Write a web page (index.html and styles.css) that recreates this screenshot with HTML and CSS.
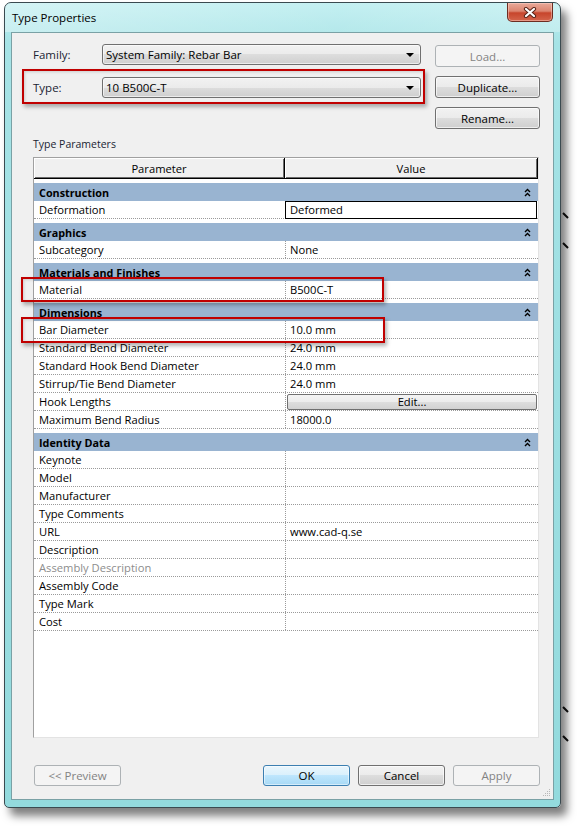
FILE: index.html
```html
<!DOCTYPE html>
<html>
<head>
<meta charset="utf-8">
<title>Type Properties</title>
<link rel="stylesheet" href="styles.css">
</head>
<body>
<svg class="behind" width="25" height="836" viewBox="0 0 25 836">
  <path d="M3 213 L8 218 M3 243 L8 248 M3 707 L8 712 M3 736 L8 741" stroke="#111" stroke-width="2"/>
</svg>
<div class="window">
  <div class="titlebar">
    <span class="title">Type Properties</span>
    <div class="close">
      <svg width="14" height="11" viewBox="0 0 14 11">
        <path d="M3 2 L11 9 M11 2 L3 9" stroke="#5a2418" stroke-width="4.2" stroke-linecap="round"/>
        <path d="M3 2 L11 9 M11 2 L3 9" stroke="#ffffff" stroke-width="2.2" stroke-linecap="round"/>
      </svg>
    </div>
  </div>
  <div class="client">
    <div class="top">
      <div class="fields">
        <span class="lbl">Family:</span>
        <div class="combo"><span>System Family: Rebar Bar</span><i class="arrow"></i></div>
        <span class="lbl">Type:</span>
        <div class="combo"><span>10 B500C-T</span><i class="arrow"></i></div>
      </div>
      <div class="side">
        <div class="btn disabled">Load...</div>
        <div class="btn">Duplicate...</div>
        <div class="btn">Rename...</div>
      </div>
    </div>
    <div class="caption">Type Parameters</div>
    <div class="grid">
      <div class="head"><div class="hc hp">Parameter</div><div class="hc hv">Value</div></div>

      <div class="group"><span>Construction</span><svg class="chev" width="7" height="9" viewBox="0 0 7 9"><path d="M1 4 L3.5 1.5 L6 4 M1 8 L3.5 5.5 L6 8" fill="none" stroke="#000" stroke-width="1.4"/></svg></div>
      <div class="row"><div class="k">Deformation</div><div class="v sel">Deformed</div></div>

      <div class="group"><span>Graphics</span><svg class="chev" width="7" height="9" viewBox="0 0 7 9"><path d="M1 4 L3.5 1.5 L6 4 M1 8 L3.5 5.5 L6 8" fill="none" stroke="#000" stroke-width="1.4"/></svg></div>
      <div class="row"><div class="k">Subcategory</div><div class="v">None</div></div>

      <div class="group"><span>Materials and Finishes</span><svg class="chev" width="7" height="9" viewBox="0 0 7 9"><path d="M1 4 L3.5 1.5 L6 4 M1 8 L3.5 5.5 L6 8" fill="none" stroke="#000" stroke-width="1.4"/></svg></div>
      <div class="row"><div class="k">Material</div><div class="v">B500C-T</div></div>

      <div class="group"><span>Dimensions</span><svg class="chev" width="7" height="9" viewBox="0 0 7 9"><path d="M1 4 L3.5 1.5 L6 4 M1 8 L3.5 5.5 L6 8" fill="none" stroke="#000" stroke-width="1.4"/></svg></div>
      <div class="row"><div class="k">Bar Diameter</div><div class="v">10.0 mm</div></div>
      <div class="row"><div class="k">Standard Bend Diameter</div><div class="v">24.0 mm</div></div>
      <div class="row"><div class="k">Standard Hook Bend Diameter</div><div class="v">24.0 mm</div></div>
      <div class="row"><div class="k">Stirrup/Tie Bend Diameter</div><div class="v">24.0 mm</div></div>
      <div class="row"><div class="k">Hook Lengths</div><div class="v vbtn"><div class="editbtn">Edit...</div></div></div>
      <div class="row"><div class="k">Maximum Bend Radius</div><div class="v">18000.0</div></div>

      <div class="group"><span>Identity Data</span><svg class="chev" width="7" height="9" viewBox="0 0 7 9"><path d="M1 4 L3.5 1.5 L6 4 M1 8 L3.5 5.5 L6 8" fill="none" stroke="#000" stroke-width="1.4"/></svg></div>
      <div class="row"><div class="k">Keynote</div><div class="v"></div></div>
      <div class="row"><div class="k">Model</div><div class="v"></div></div>
      <div class="row"><div class="k">Manufacturer</div><div class="v"></div></div>
      <div class="row"><div class="k">Type Comments</div><div class="v"></div></div>
      <div class="row"><div class="k">URL</div><div class="v">www.cad-q.se</div></div>
      <div class="row"><div class="k">Description</div><div class="v"></div></div>
      <div class="row"><div class="k muted">Assembly Description</div><div class="v"></div></div>
      <div class="row"><div class="k">Assembly Code</div><div class="v"></div></div>
      <div class="row"><div class="k">Type Mark</div><div class="v"></div></div>
      <div class="row"><div class="k">Cost</div><div class="v"></div></div>
    </div>
    <div class="footer">
      <div class="btn disabled fbtn">&lt;&lt; Preview</div>
      <div class="actions">
        <div class="btn default fbtn">OK</div>
        <div class="btn fbtn">Cancel</div>
        <div class="btn disabled fbtn">Apply</div>
      </div>
    </div>
    <svg class="grip" width="8" height="8" viewBox="0 0 8 8">
      <g fill="#b9b9b9">
        <rect x="6" y="0" width="1" height="1"/>
        <rect x="4" y="2" width="1" height="1"/><rect x="6" y="2" width="1" height="1"/>
        <rect x="2" y="4" width="1" height="1"/><rect x="4" y="4" width="1" height="1"/><rect x="6" y="4" width="1" height="1"/>
        <rect x="0" y="6" width="1" height="1"/><rect x="2" y="6" width="1" height="1"/><rect x="4" y="6" width="1" height="1"/><rect x="6" y="6" width="1" height="1"/>
      </g>
    </svg>
    <div class="mark mark-type"></div>
    <div class="mark mark-material"></div>
    <div class="mark mark-bar"></div>
  </div>
</div>
</body>
</html>
```
FILE: styles.css
```css
* { box-sizing: border-box; }

html, body {
  margin: 0;
  padding: 0;
  background: #ffffff;
}

body {
  width: 585px;
  height: 836px;
  position: relative;
  overflow: hidden;
  font-family: "Open Sans", "Noto Sans", sans-serif;
  font-size: 11px;
  color: #000;
}

.behind {
  position: absolute;
  left: 560px;
  top: 0;
}

.window {
  position: relative;
  margin: 2px 0 0 4px;
  width: 557px;
  height: 806px;
  border: 1px solid #3a4a50;
  border-radius: 7px 7px 5px 5px;
  background: linear-gradient(to bottom, #bdeef0 0px, #a6e3e6 40px, #93dadd 100%);
  box-shadow: 6px 8px 8px rgba(0, 0, 0, 0.5);
}

.titlebar {
  height: 29px;
  display: flex;
  align-items: flex-start;
  background: linear-gradient(100deg, rgba(255,255,255,0.35) 0%, rgba(255,255,255,0.1) 60%, rgba(255,255,255,0.25) 100%);
  border-radius: 6px 6px 0 0;
}

.title {
  margin: 7px 0 0 7px;
  font-size: 11.5px;
  line-height: 16px;
  color: #000;
}

.close {
  margin-left: auto;
  margin-right: 7px;
  width: 46px;
  height: 19px;
  border: 1px solid #6d2d22;
  border-top: none;
  border-radius: 0 0 5px 5px;
  background: linear-gradient(to bottom, #e9a999 0%, #dc8570 45%, #c7452c 55%, #d4654c 100%);
  box-shadow: inset 0 0 0 1px rgba(255, 220, 210, 0.45);
  display: flex;
  align-items: center;
  justify-content: center;
}

.client {
  position: relative;
  margin: 0 6px;
  width: 543px;
  height: 768px;
  border: 1px solid #7aa1a5;
  background: #f0f0f0;
}

/* top area */
.top {
  display: flex;
  padding: 11px 0 0 21px;
}

.fields {
  display: grid;
  grid-template-columns: 69px 319px;
  grid-auto-rows: 21px;
  row-gap: 12px;
  align-items: center;
}

.lbl {
  font-size: 11.5px;
  color: #1a2433;
}

.combo {
  height: 21px;
  border: 1px solid #707070;
  border-radius: 3px;
  background: linear-gradient(to bottom, #f2f2f2 0%, #ebebeb 50%, #dddddd 50%, #cfcfcf 100%);
  box-shadow: inset 0 0 0 1px rgba(255, 255, 255, 0.6);
  display: flex;
  align-items: center;
  padding: 0 6px 0 3px;
  font-size: 11.5px;
}

.combo span { flex: 1; }

.arrow {
  width: 0;
  height: 0;
  border-left: 4px solid transparent;
  border-right: 4px solid transparent;
  border-top: 4px solid #000;
}

.side {
  margin-left: 14px;
  margin-top: 1px;
  width: 105px;
  display: flex;
  flex-direction: column;
  gap: 9px;
}

.btn {
  height: 22px;
  border: 1px solid #707070;
  border-radius: 3px;
  background: linear-gradient(to bottom, #f2f2f2 0%, #ebebeb 50%, #dddddd 50%, #cfcfcf 100%);
  box-shadow: inset 0 0 0 1px rgba(255, 255, 255, 0.65);
  display: flex;
  align-items: center;
  justify-content: center;
  font-size: 11.5px;
  color: #000;
}

.btn.disabled {
  border-color: #adb2b5;
  background: #f4f4f4;
  box-shadow: none;
  color: #838383;
}

.btn.default {
  border-color: #3c7fb1;
  background: linear-gradient(to bottom, #eaf6fd 0%, #d9f0fc 50%, #bee6fd 50%, #a7d9f5 100%);
  box-shadow: inset 0 0 0 1px rgba(255, 255, 255, 0.5);
}

.caption {
  margin: 7px 0 5px 21px;
  height: 16px;
  line-height: 16px;
  font-size: 10.5px;
  color: #1a2433;
}

/* property grid */
.grid {
  margin-left: 21px;
  width: 506px;
  height: 581px;
  background: #fff;
  border: 1px solid;
  border-color: #a0a0a0 #e3e3e3 #e3e3e3 #a0a0a0;
  font-size: 11.2px;
}

.head {
  display: flex;
  height: 21px;
  background: #f0f0f0;
}

.hc {
  display: flex;
  align-items: center;
  justify-content: center;
  border-right: 1px solid #000;
  border-bottom: 1px solid #000;
  box-shadow: inset 1px 1px 0 #fff, inset -1px -1px 0 #6a6a6a;
}

.hp { width: 251px; }
.hv { width: 253px; }

.group {
  margin-top: 4px;
  height: 18px;
  background: #99b4d1;
  display: flex;
  align-items: center;
  padding: 0 7px 0 5px;
  font-weight: 700;
  font-size: 10.8px;
}

.group span { flex: 1; }

.chev { display: block; }

.row {
  display: flex;
  height: 18px;
  border-bottom: 1px dotted #9a9a9a;
}

.k {
  width: 251px;
  padding-left: 5px;
  line-height: 17px;
  white-space: nowrap;
}

.k.muted { color: #8d8d8d; }

.v {
  width: 253px;
  padding-left: 4px;
  line-height: 17px;
  border-left: 1px dotted #9a9a9a;
  white-space: nowrap;
}

.v.sel {
  width: 252px;
  border: 1px solid #000;
  margin-bottom: -1px;
  line-height: 15px;
}

.v.vbtn {
  padding: 1px 1px 0 1px;
}

.editbtn {
  height: 16px;
  border: 1px solid #707070;
  border-radius: 2px;
  background: linear-gradient(to bottom, #f4f4f4 0%, #ececec 50%, #dedede 50%, #d2d2d2 100%);
  display: flex;
  align-items: center;
  justify-content: center;
  line-height: 14px;
}

/* footer */
.footer {
  display: flex;
  margin-top: 27px;
  padding: 0 13px 0 22px;
}

.fbtn {
  width: 87px;
  height: 21px;
}

.actions {
  margin-left: auto;
  display: flex;
  gap: 8px;
}

.grip {
  position: absolute;
  right: 2px;
  bottom: 2px;
}

/* red annotation marks */
.mark {
  position: absolute;
  border: 2px solid #c00000;
  box-shadow: 2px 3px 4px rgba(0, 0, 0, 0.3), inset 1px 1px 3px rgba(0, 0, 0, 0.15);
  pointer-events: none;
}

.mark-type { left: 10px; top: 36px; width: 403px; height: 35px; }
.mark-material { left: 9px; top: 244px; width: 363px; height: 25px; }
.mark-bar { left: 9px; top: 284px; width: 364px; height: 26px; }
```
